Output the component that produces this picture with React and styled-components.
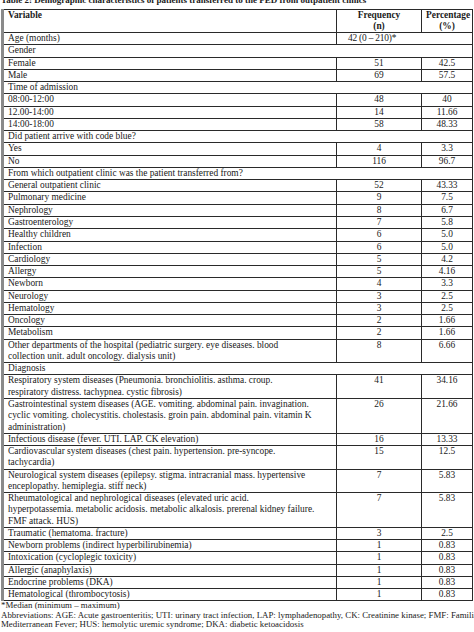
import React from 'react'
import styled, { createGlobalStyle } from 'styled-components'

const GlobalStyle = createGlobalStyle`
  html, body {
    margin: 0;
    padding: 0;
    background: #fff;
  }
  body {
    font-family: "Liberation Serif", "Times New Roman", serif;
    color: #1a1a1a;
  }
`

const rows = [
  { type: 'age' },
  { type: 'section', label: 'Gender' },
  { label: 'Female', n: '51', pct: '42.5' },
  { label: 'Male', n: '69', pct: '57.5' },
  { type: 'section', label: 'Time of admission' },
  { label: '08:00-12:00', n: '48', pct: '40' },
  { label: '12.00-14:00', n: '14', pct: '11.66' },
  { label: '14:00-18:00', n: '58', pct: '48.33' },
  { type: 'section', label: 'Did patient arrive with code blue?' },
  { label: 'Yes', n: '4', pct: '3.3' },
  { label: 'No', n: '116', pct: '96.7' },
  { type: 'section', label: 'From which outpatient clinic was the patient transferred from?' },
  { label: 'General outpatient clinic', n: '52', pct: '43.33' },
  { label: 'Pulmonary medicine', n: '9', pct: '7.5' },
  { label: 'Nephrology', n: '8', pct: '6.7' },
  { label: 'Gastroenterology', n: '7', pct: '5.8' },
  { label: 'Healthy children', n: '6', pct: '5.0' },
  { label: 'Infection', n: '6', pct: '5.0' },
  { label: 'Cardiology', n: '5', pct: '4.2' },
  { label: 'Allergy', n: '5', pct: '4.16' },
  { label: 'Newborn', n: '4', pct: '3.3' },
  { label: 'Neurology', n: '3', pct: '2.5' },
  { label: 'Hematology', n: '3', pct: '2.5' },
  { label: 'Oncology', n: '2', pct: '1.66' },
  { label: 'Metabolism', n: '2', pct: '1.66' },
  {
    label: [
      'Other departments of the hospital (pediatric surgery. eye diseases. blood',
      'collection unit. adult oncology. dialysis unit)',
    ],
    n: '8',
    pct: '6.66',
  },
  { type: 'section', label: 'Diagnosis' },
  {
    label: [
      'Respiratory system diseases (Pneumonia. bronchiolitis. asthma. croup.',
      'respiratory distress. tachypnea. cystic fibrosis)',
    ],
    n: '41',
    pct: '34.16',
  },
  {
    label: [
      'Gastrointestinal system diseases (AGE. vomiting. abdominal pain. invagination.',
      'cyclic vomiting. cholecystitis. cholestasis. groin pain. abdominal pain. vitamin K',
      'administration)',
    ],
    n: '26',
    pct: '21.66',
  },
  { label: 'Infectious disease (fever. UTI. LAP. CK elevation)', n: '16', pct: '13.33' },
  {
    label: [
      'Cardiovascular system diseases (chest pain. hypertension. pre-syncope.',
      'tachycardia)',
    ],
    n: '15',
    pct: '12.5',
  },
  {
    label: [
      'Neurological system diseases (epilepsy. stigma. intracranial mass. hypertensive',
      'enceplopathy. hemiplegia. stiff neck)',
    ],
    n: '7',
    pct: '5.83',
  },
  {
    label: [
      'Rheumatological and nephrological diseases (elevated uric acid.',
      'hyperpotassemia. metabolic acidosis. metabolic alkalosis. prerenal kidney failure.',
      'FMF attack. HUS)',
    ],
    n: '7',
    pct: '5.83',
  },
  { label: 'Traumatic (hematoma. fracture)', n: '3', pct: '2.5' },
  { label: 'Newborn problems (indirect hyperbilirubinemia)', n: '1', pct: '0.83' },
  { label: 'Intoxication (cycloplegic toxicity)', n: '1', pct: '0.83' },
  { label: 'Allergic (anaphylaxis)', n: '1', pct: '0.83' },
  { label: 'Endocrine problems (DKA)', n: '1', pct: '0.83' },
  { label: 'Hematological (thrombocytosis)', n: '1', pct: '0.83' },
]

const Page = styled.div`
  width: 474px;
  height: 632px;
  overflow: hidden;
`

const Title = styled.div`
  margin-top: -6px;
  padding-left: 1px;
  font-size: 9px;
  line-height: 12px;
  font-weight: bold;
  white-space: nowrap;
`

const Table = styled.table`
  margin: 3px 0 0 1px;
  width: 472px;
  border-collapse: collapse;
  table-layout: fixed;
  border-left: 3px solid #8a8a8a;
  font-size: 9.4px;
`

const Th = styled.th`
  border: 1px solid #2a2a2a;
  padding: 0 4px;
  line-height: 11px;
  font-weight: bold;
  text-align: ${p => (p.$center ? 'center' : 'left')};
  vertical-align: top;
  width: ${p => p.$w};
`

const Td = styled.td`
  border: 1px solid #2a2a2a;
  padding: 0 4px;
  line-height: 11.26px;
  text-align: ${p => (p.$center ? 'center' : 'left')};
  vertical-align: top;
  white-space: nowrap;
`

const SpanNote = styled.span`
  padding-left: ${p => p.$indent || 0}px;
  letter-spacing: -0.2px;
`

const Notes = styled.div`
  padding-left: 1px;
  font-size: 8.85px;
  line-height: 9.5px;
  white-space: nowrap;
`

const Label = ({ label }) =>
  Array.isArray(label)
    ? label.map((line, i) => (
        <React.Fragment key={i}>
          {i > 0 && <br />}
          {line}
        </React.Fragment>
      ))
    : label

export default function App() {
  return (
    <Page>
      <GlobalStyle />
      <Title>
        Table 2: Demographic characteristics of patients transferred to the PED from outpatient clinics
      </Title>
      <Table>
        <thead>
          <tr>
            <Th $w="324px">Variable</Th>
            <Th $w="76px" $center>
              Frequency
              <br />
              (n)
            </Th>
            <Th $center>
              Percentage
              <br />
              (%)
            </Th>
          </tr>
        </thead>
        <tbody>
          {rows.map((r, i) => {
            if (r.type === 'age') {
              return (
                <tr key={i}>
                  <Td>Age (months)</Td>
                  <Td colSpan={2}>
                    <SpanNote $indent={7}>42 (0 – 210)*</SpanNote>
                  </Td>
                </tr>
              )
            }
            if (r.type === 'section') {
              return (
                <tr key={i}>
                  <Td colSpan={3}>{r.label}</Td>
                </tr>
              )
            }
            return (
              <tr key={i}>
                <Td>
                  <Label label={r.label} />
                </Td>
                <Td $center>{r.n}</Td>
                <Td $center>{r.pct}</Td>
              </tr>
            )
          })}
        </tbody>
      </Table>
      <Notes>
        *Median (minimum – maximum)
        <br />
        Abbreviations: AGE: Acute gastroenteritis; UTI: urinary tract infection, LAP: lymphadenopathy, CK: Creatinine kinase; FMF: Familial
        <br />
        Mediterranean Fever; HUS: hemolytic uremic syndrome; DKA: diabetic ketoacidosis
      </Notes>
    </Page>
  )
}
